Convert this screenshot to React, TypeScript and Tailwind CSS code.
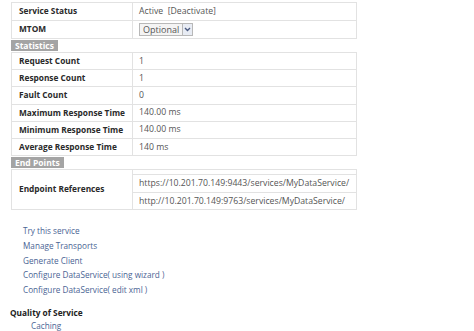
import React from 'react'

const stats: [string, string][] = [
  ['Request Count', '1'],
  ['Response Count', '1'],
  ['Fault Count', '0'],
  ['Maximum Response Time', '140.00 ms'],
  ['Minimum Response Time', '140.00 ms'],
  ['Average Response Time', '140 ms'],
]

const links = [
  'Try this service',
  'Manage Transports',
  'Generate Client',
  'Configure DataService( using wizard )',
  'Configure DataService( edit xml )',
]

const labelCls =
  "border border-[#e2e2e2] pl-[7px] whitespace-nowrap font-['Open_Sans',sans-serif] text-[8.3px] font-bold leading-none text-[#2a2a2a]"
const valueCls =
  "border border-[#e2e2e2] pl-[6px] whitespace-nowrap font-['Open_Sans',sans-serif] text-[8.7px] leading-none text-[#555]"

function Cols() {
  return (
    <colgroup>
      <col className="w-[121px]" />
      <col />
    </colgroup>
  )
}

function SectionHeader({ title }: { title: string }) {
  return (
    <div className="flex">
      <div className="h-[11px] bg-[#a4a4a4] px-[4px] font-['Open_Sans',sans-serif] text-[8.5px] font-bold leading-[11px] text-white">
        {title}
      </div>
    </div>
  )
}

export default function App() {
  return (
    <div className="flex h-[331px] w-[474px] flex-col items-start overflow-hidden bg-white pl-[10px] font-['Open_Sans',sans-serif]">
      <div className="ml-[1px] w-[346px] pt-[2px]">
        <table className="w-full table-fixed border-collapse">
          <Cols />
          <tbody>
            <tr className="h-[18px]">
              <td className={labelCls}>Service Status</td>
              <td className={valueCls}>Active&nbsp; [Deactivate]</td>
            </tr>
            <tr className="h-[18px]">
              <td className={labelCls}>MTOM</td>
              <td className={valueCls}>
                <div className="inline-flex h-[13px] items-center border border-[#b8b8b8] bg-[#f4f4f4] align-middle">
                  <span className="px-[3px] text-[9px] text-[#555]">Optional</span>
                  <span className="flex h-[11px] w-[10px] items-center justify-center border-l border-[#b8b8b8] bg-[#e8ecf4]">
                    <svg width="7" height="5" viewBox="0 0 7 5">
                      <path d="M1 1 L3.5 3.5 L6 1" fill="none" stroke="#4a5a80" strokeWidth="1.4" />
                    </svg>
                  </span>
                </div>
              </td>
            </tr>
          </tbody>
        </table>
        <div className="mt-[1px]">
          <SectionHeader title="Statistics" />
        </div>
        <table className="mt-[1px] w-full table-fixed border-collapse">
          <Cols />
          <tbody>
            {stats.map(([k, v]) => (
              <tr key={k} className="h-[17.2px]">
                <td className={labelCls}>{k}</td>
                <td className={valueCls}>{v}</td>
              </tr>
            ))}
          </tbody>
        </table>
        <div className="mt-[1px]">
          <SectionHeader title="End Points" />
        </div>
        <table className="mt-[1px] w-full table-fixed border-collapse">
          <Cols />
          <tbody>
            <tr className="h-[5px]">
              <td rowSpan={3} className={labelCls}>
                Endpoint References
              </td>
              <td className="border border-[#e2e2e2]" />
            </tr>
            <tr className="h-[17.5px]">
              <td className={valueCls}>https://10.201.70.149:9443/services/MyDataService/</td>
            </tr>
            <tr className="h-[17.5px]">
              <td className={valueCls}>http://10.201.70.149:9763/services/MyDataService/</td>
            </tr>
          </tbody>
        </table>
      </div>

      <div className="ml-[13px] mt-[16px] flex flex-col gap-[4px]">
        {links.map((l) => (
          <a key={l} className="text-[8.2px] leading-[10.7px] text-[#4a6494]">
            {l}
          </a>
        ))}
      </div>
      <div className="mt-[11px] text-[8.3px] font-bold leading-[11px] text-[#222]">Quality of Service</div>
      <div className="ml-[21px] mt-[2px] text-[8.2px] leading-[11px] text-[#4a6494]">Caching</div>
    </div>
  )
}
